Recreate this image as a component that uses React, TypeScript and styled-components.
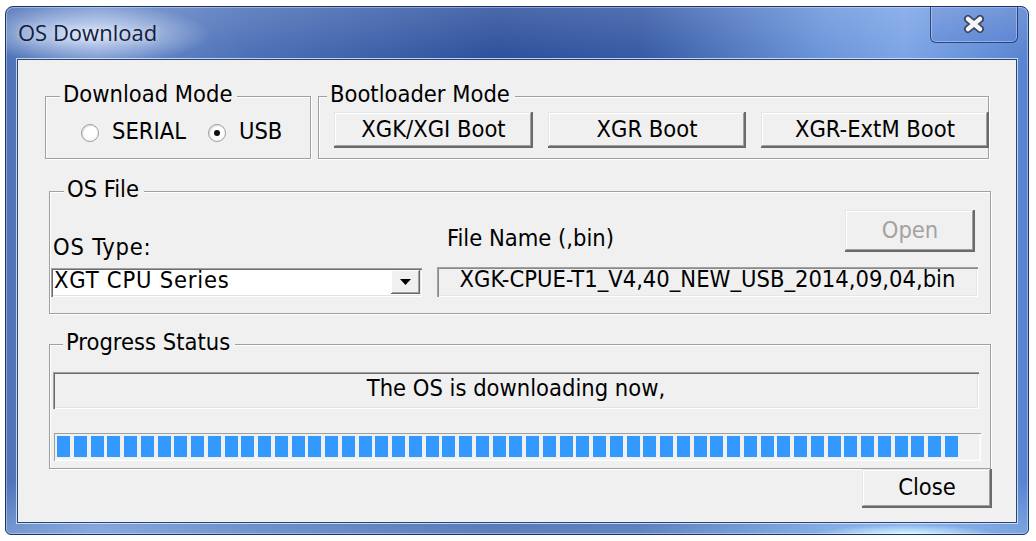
import React from 'react';
import styled, { createGlobalStyle } from 'styled-components';

const FONT = `"DejaVu Sans Condensed", "DejaVu Sans", "Liberation Sans", sans-serif`;

const Global = createGlobalStyle`
  html, body { margin: 0; padding: 0; background: #ffffff; }
  body { width: 1036px; height: 541px; overflow: hidden; font-family: ${FONT}; font-stretch: condensed; }
  * { box-sizing: border-box; }
`;

const Page = styled.div`
  padding: 6px 0 0 5px;
`;

const Window = styled.div`
  width: 1024px;
  height: 529px;
  display: flex;
  flex-direction: column;
  border: 1px solid #1b356a;
  border-radius: 8px 8px 6px 6px;
  background:
    radial-gradient(ellipse 120px 30px at 85px 27px, rgba(226, 236, 252, 0.9), rgba(226, 236, 252, 0)),
    radial-gradient(ellipse 90px 9px at 900px 100%, rgba(215, 252, 255, 0.95), rgba(215, 252, 255, 0)),
    linear-gradient(180deg, rgba(255, 255, 255, 0.14) 0%, rgba(255, 255, 255, 0) 10%, rgba(255, 255, 255, 0) 90%, rgba(190, 225, 255, 0.35) 100%),
    linear-gradient(90deg, #4f73b8 0%, #6d8dcb 9%, #4b6fb6 24%, #2d509c 48%, #3559a4 62%, #6b95da 80%, #7ca4e6 88%, #5783d0 100%);
  box-shadow: inset 0 0 0 1px rgba(255, 255, 255, 0.35);
  overflow: hidden;
`;

const TitleBar = styled.div`
  height: 52px;
  display: flex;
  align-items: flex-start;
  justify-content: space-between;
  padding: 0 10px 0 12px;
`;

const Title = styled.div`
  margin-top: 12px;
  font-family: "Open Sans", "Noto Sans", sans-serif;
  font-stretch: normal;
  font-size: 22px;
  line-height: 26px;
  color: #13203c;
  text-shadow: 0 0 6px rgba(255, 255, 255, 0.6);
`;

const CloseX = styled.div`
  width: 88px;
  height: 37px;
  margin-top: -1px;
  display: flex;
  align-items: center;
  justify-content: center;
  border: 1px solid rgba(20, 40, 90, 0.75);
  border-top: none;
  border-radius: 0 0 6px 6px;
  background: linear-gradient(180deg, rgba(120, 150, 215, 0.35), rgba(90, 130, 210, 0.45));
  box-shadow: inset 0 0 0 1px rgba(210, 225, 255, 0.45);
`;

const Client = styled.div`
  margin: 0 11px;
  height: 464px;
  border: 1px solid #2e466f;
  background: #f0f0f0;
  box-shadow: 0 0 0 1px rgba(210, 230, 255, 0.85);
  display: flex;
  flex-direction: column;
  padding: 36px 24px 0 27px;
  font-size: 23.5px;
  line-height: 26px;
  color: #000;
`;

const Row = styled.div`
  display: flex;
  gap: 7px;
`;

const Group = styled.div<{ $w: number; $h: number; $ml?: number; $mt?: number }>`
  width: ${(p) => p.$w}px;
  height: ${(p) => p.$h}px;
  margin-left: ${(p) => p.$ml ?? 0}px;
  margin-top: ${(p) => p.$mt ?? 0}px;
  border: 1px solid #a0a0a0;
  box-shadow: 1px 1px 0 #ffffff, inset 1px 1px 0 #ffffff;
  display: flex;
  flex-direction: column;
`;

const Legend = styled.div<{ $ml: number }>`
  align-self: flex-start;
  margin: -16px 0 0 ${(p) => p.$ml}px;
  padding: 0 5px 0 3px;
  height: 26px;
  background: #f0f0f0;
  white-space: nowrap;
`;

const RadioRow = styled.div`
  display: flex;
  align-items: center;
  gap: 22px;
  margin-top: 11px;
  padding-left: 35px;
  height: 26px;
`;

const RadioItem = styled.label`
  display: flex;
  align-items: center;
  gap: 13px;
`;

const RadioCircle = styled.span`
  width: 18px;
  height: 18px;
  margin-top: 4px;
  border-radius: 50%;
  border: 1px solid #a0a0a0;
  background: radial-gradient(circle at 45% 40%, #ffffff 55%, #e8e8e8 100%);
  box-shadow: inset 1px 1px 1px rgba(0, 0, 0, 0.15);
  display: flex;
  align-items: center;
  justify-content: center;
`;

const RadioDot = styled.span`
  width: 6px;
  height: 6px;
  border-radius: 50%;
  background: #111;
`;

const ButtonRow = styled.div`
  display: flex;
  gap: 15px;
  margin-top: 5px;
  padding-left: 15px;
`;

const Btn = styled.div<{ $w: number; $h: number; $disabled?: boolean }>`
  width: ${(p) => p.$w}px;
  height: ${(p) => p.$h}px;
  flex: none;
  display: flex;
  align-items: center;
  justify-content: center;
  background: #f0f0f0;
  color: ${(p) => (p.$disabled ? '#a3a3a3' : '#000')};
  box-shadow:
    inset -2px -2px 0 #6a6a6a,
    inset 1px 1px 0 #e6e6e6,
    inset -3px -3px 0 #a0a0a0,
    inset 2px 2px 0 #ffffff;
  padding-bottom: 3px;
  white-space: nowrap;
`;

const FileGrid = styled.div`
  flex: 1;
  display: grid;
  grid-template-columns: 371px 541px;
  column-gap: 15px;
  align-items: end;
  padding: 0 0 16px 1px;
`;

const Col = styled.div`
  display: flex;
  flex-direction: column;
`;

const FieldLabel = styled.div<{ $ml: number; $mb: number; $ls?: number }>`
  margin-left: ${(p) => p.$ml}px;
  margin-bottom: ${(p) => p.$mb}px;
  letter-spacing: ${(p) => p.$ls ?? 0}px;
  white-space: nowrap;
`;

const Combo = styled.div`
  height: 29px;
  display: flex;
  align-items: stretch;
  background: #ffffff;
  padding: 2px 2px 3px 3px;
  box-shadow:
    inset 1px 1px 0 #a0a0a0,
    inset 2px 2px 0 #6d6d6d,
    inset -1px -1px 0 #ffffff,
    inset -2px -2px 0 #e3e3e3;
`;

const ComboText = styled.div`
  flex: 1;
  display: flex;
  align-items: center;
  line-height: 24px;
  padding-bottom: 5px;
  letter-spacing: 0.8px;
  white-space: nowrap;
`;

const DropBtn = styled.div`
  width: 29px;
  display: flex;
  align-items: center;
  justify-content: center;
  background: #f0f0f0;
  box-shadow:
    inset -1px -1px 0 #6a6a6a,
    inset 1px 1px 0 #ffffff,
    inset -2px -2px 0 #a0a0a0;
`;

const TopLine = styled.div`
  display: flex;
  justify-content: space-between;
  align-items: flex-end;
  margin-bottom: 15px;
  padding-right: 3px;
`;

const FileBox = styled.div`
  height: 30px;
  display: flex;
  align-items: center;
  justify-content: center;
  padding-bottom: 6px;
  background: #f0f0f0;
  white-space: nowrap;
  box-shadow:
    inset 1px 1px 0 #a0a0a0,
    inset 2px 2px 0 #8a8a8a,
    inset -1px -1px 0 #ffffff,
    inset -2px -2px 0 #e6e6e6;
`;

const StatusBox = styled.div`
  margin: 17px 0 0 3px;
  width: 926px;
  height: 37px;
  display: flex;
  align-items: center;
  justify-content: center;
  padding-bottom: 5px;
  background: #f0f0f0;
  box-shadow:
    inset 1px 1px 0 #a0a0a0,
    inset 2px 2px 0 #6a6a6a,
    inset -1px -1px 0 #ffffff,
    inset -2px -2px 0 #e3e3e3;
`;

const ProgressTrack = styled.div`
  margin: 24px 0 0 4px;
  width: 927px;
  height: 28px;
  display: flex;
  align-items: flex-start;
  gap: 3.75px;
  padding: 3px 2px 0 3px;
  background: #f0f0f0;
  box-shadow:
    inset 1px 1px 0 #a0a0a0,
    inset -1px -1px 0 #ffffff,
    inset -2px -2px 0 #f6f6f6;
`;

const Segment = styled.div`
  width: 13px;
  height: 21px;
  flex: none;
  background: #3399ff;
`;

const Footer = styled.div`
  display: flex;
  justify-content: flex-end;
`;

const segments = Array.from({ length: 54 }, (_, i) => i);

export default function App() {
  return (
    <Page>
      <Global />
      <Window>
        <TitleBar>
          <Title>OS Download</Title>
          <CloseX>
            <svg width="22" height="20" viewBox="0 0 22 20">
              <path d="M5 5 L17 15 M17 5 L5 15" stroke="#3b4660" strokeWidth="8" strokeLinecap="round" />
              <path d="M5 5 L17 15 M17 5 L5 15" stroke="#f4f6fa" strokeWidth="4.5" strokeLinecap="round" />
            </svg>
          </CloseX>
        </TitleBar>
        <Client>
          <Row>
            <Group $w={266} $h={63}>
              <Legend $ml={14}>Download Mode</Legend>
              <RadioRow>
                <RadioItem>
                  <RadioCircle />
                  SERIAL
                </RadioItem>
                <RadioItem>
                  <RadioCircle>
                    <RadioDot />
                  </RadioCircle>
                  USB
                </RadioItem>
              </RadioRow>
            </Group>
            <Group $w={671} $h={63}>
              <Legend $ml={8}>Bootloader Mode</Legend>
              <ButtonRow>
                <Btn $w={199} $h={36}>XGK/XGI Boot</Btn>
                <Btn $w={198} $h={36}>XGR Boot</Btn>
                <Btn $w={228} $h={36}>XGR-ExtM Boot</Btn>
              </ButtonRow>
            </Group>
          </Row>

          <Group $w={942} $h={123} $ml={4} $mt={32}>
            <Legend $ml={14}>OS File</Legend>
            <FileGrid>
              <Col>
                <FieldLabel $ml={2} $mb={8} $ls={0.8}>OS Type:</FieldLabel>
                <Combo>
                  <ComboText>XGT CPU Series</ComboText>
                  <DropBtn>
                    <svg width="11" height="6" viewBox="0 0 11 6">
                      <path d="M0 0 H11 L5.5 6 Z" fill="#000" />
                    </svg>
                  </DropBtn>
                </Combo>
              </Col>
              <Col>
                <TopLine>
                  <FieldLabel $ml={10} $mb={1}>File Name (,bin)</FieldLabel>
                  <Btn $w={130} $h={42} $disabled>Open</Btn>
                </TopLine>
                <FileBox>XGK-CPUE-T1_V4,40_NEW_USB_2014,09,04,bin</FileBox>
              </Col>
            </FileGrid>
          </Group>

          <Group $w={942} $h={125} $ml={4} $mt={30}>
            <Legend $ml={13}>Progress Status</Legend>
            <StatusBox>The OS is downloading now,</StatusBox>
            <ProgressTrack>
              {segments.map((i) => (
                <Segment key={i} />
              ))}
            </ProgressTrack>
          </Group>

          <Footer>
            <Btn $w={130} $h={39}>Close</Btn>
          </Footer>
        </Client>
      </Window>
    </Page>
  );
}
